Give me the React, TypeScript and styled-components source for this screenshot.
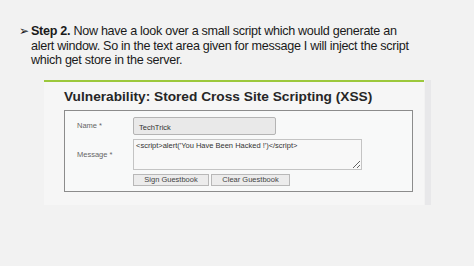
import React from "react";
import styled, { createGlobalStyle } from "styled-components";

const GlobalStyle = createGlobalStyle`
  html, body {
    margin: 0;
    padding: 0;
    background: #f2f2f2;
  }
  body {
    font-family: "Liberation Sans", Arial, sans-serif;
  }
`;

const Slide = styled.div`
  width: 474px;
  height: 266px;
  overflow: hidden;
  background: #f2f2f2;
  display: flex;
  flex-direction: column;
`;

const Bullet = styled.div`
  display: flex;
  padding: 24px 20px 0 19px;
  font-size: 12.6px;
  letter-spacing: -0.3px;
  line-height: 14.6px;
  color: #1a1a1a;
  white-space: nowrap;
`;

const Marker = styled.span`
  width: 12px;
  flex: none;
  font-family: "DejaVu Sans", sans-serif;
  font-size: 12px;
  letter-spacing: 0;
`;

const Strong = styled.b`
  font-weight: bold;
`;

const ShotRow = styled.div`
  display: flex;
  margin: 12px 0 0 44px;
  height: 125px;
`;

const Shot = styled.div`
  width: 380px;
  border-top: 2px solid #9cc83c;
  background: #f6f6f6;
  padding: 6px 0 0 20px;
  box-sizing: border-box;
`;

const Scroll = styled.div`
  width: 6px;
  margin-left: 1px;
  background: #e8e8ea;
`;

const Title = styled.h1`
  margin: 0 0 4px 0;
  font-size: 13.7px;
  line-height: 18px;
  font-weight: bold;
  color: #262626;
  white-space: nowrap;
`;

const FormBox = styled.div`
  width: 349px;
  height: 82px;
  box-sizing: border-box;
  border: 1px solid #8c8c8c;
  background: #f8f9f9;
  padding: 6px 0 0 12px;
  display: grid;
  grid-template-columns: 56px 1fr;
  grid-template-rows: 18px 31px 12px;
  row-gap: 4px;
  align-items: center;
`;

const Label = styled.div`
  font-size: 7.5px;
  color: #666;
`;

const NameInput = styled.div`
  width: 143px;
  height: 18px;
  box-sizing: border-box;
  border: 1px solid #b4b4b4;
  border-radius: 2px;
  background: #e9e9e9;
  font-size: 7.5px;
  color: #333;
  padding: 5px 0 0 5px;
`;

const MessageArea = styled.textarea`
  width: 229px;
  height: 31px;
  box-sizing: border-box;
  border: 1px solid #c4c4c4;
  background: #f8f8f8;
  font-family: "Liberation Sans", Arial, sans-serif;
  font-size: 7.5px;
  color: #333;
  padding: 1px 2px;
  margin: 0;
  outline: none;
  display: block;
`;

const Buttons = styled.div`
  display: flex;
  gap: 2px;
  grid-column: 2;
`;

const Button = styled.div<{ $w: number }>`
  width: ${(p) => p.$w}px;
  height: 12px;
  box-sizing: border-box;
  border: 1px solid #b8b8b8;
  background: #ececec;
  font-size: 7.5px;
  color: #444;
  display: flex;
  align-items: center;
  justify-content: center;
`;

export default function App() {
  return (
    <>
      <GlobalStyle />
      <Slide>
        <Bullet>
          <Marker>➢</Marker>
          <div>
            <Strong>Step 2.</Strong> Now have a look over a small script which would generate an
            <br />
            alert window. So in the text area given for message I will inject the script
            <br />
            which get store in the server.
          </div>
        </Bullet>
        <ShotRow>
          <Shot>
            <Title>Vulnerability: Stored Cross Site Scripting (XSS)</Title>
            <FormBox>
              <Label>Name *</Label>
              <NameInput>TechTrick</NameInput>
              <Label>Message *</Label>
              <MessageArea readOnly value="<script>alert('You Have Been Hacked !')</script>" />
              <Buttons>
                <Button $w={76}>Sign Guestbook</Button>
                <Button $w={79}>Clear Guestbook</Button>
              </Buttons>
            </FormBox>
          </Shot>
          <Scroll />
        </ShotRow>
      </Slide>
    </>
  );
}
